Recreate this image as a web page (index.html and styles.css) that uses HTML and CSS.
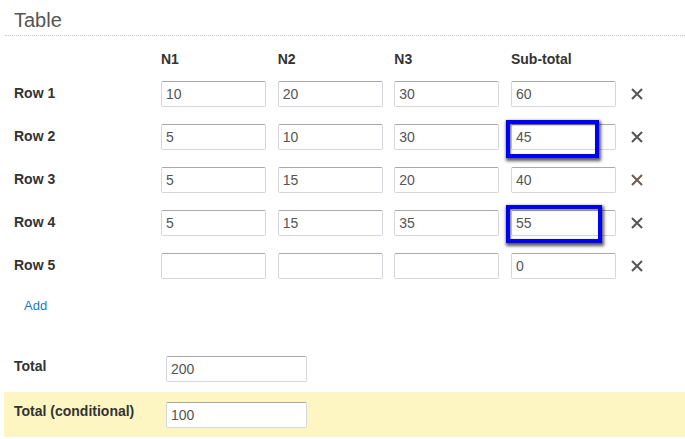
FILE: index.html
```html
<!DOCTYPE html>
<html>
<head>
<meta charset="utf-8">
<link rel="stylesheet" href="styles.css">
</head>
<body>
<div class="page">
  <h2 class="title">Table</h2>
  <div class="grid">
    <div class="row head">
      <div class="label"></div>
      <div class="cell">N1</div>
      <div class="cell">N2</div>
      <div class="cell">N3</div>
      <div class="cell">Sub-total</div>
    </div>
    <div class="row">
      <div class="label">Row 1</div>
      <div class="cell"><input class="num" value="10"></div>
      <div class="cell"><input class="num" value="20"></div>
      <div class="cell"><input class="num" value="30"></div>
      <div class="cell sub"><input class="num" value="60"></div>
      <span class="remove"><svg width="12" height="12" viewBox="0 0 12 12"><path d="M1 1L11 11M11 1L1 11" stroke="#555" stroke-width="2"/></svg></span>
    </div>
    <div class="row">
      <div class="label">Row 2</div>
      <div class="cell"><input class="num" value="5"></div>
      <div class="cell"><input class="num" value="10"></div>
      <div class="cell"><input class="num" value="30"></div>
      <div class="cell sub"><input class="num" value="45"><span class="hl hl-a"></span></div>
      <span class="remove"><svg width="12" height="12" viewBox="0 0 12 12"><path d="M1 1L11 11M11 1L1 11" stroke="#555" stroke-width="2"/></svg></span>
    </div>
    <div class="row">
      <div class="label">Row 3</div>
      <div class="cell"><input class="num" value="5"></div>
      <div class="cell"><input class="num" value="15"></div>
      <div class="cell"><input class="num" value="20"></div>
      <div class="cell sub"><input class="num" value="40"></div>
      <span class="remove"><svg width="12" height="12" viewBox="0 0 12 12"><path d="M1 1L11 11M11 1L1 11" stroke="#6e5a50" stroke-width="2"/></svg></span>
    </div>
    <div class="row">
      <div class="label">Row 4</div>
      <div class="cell"><input class="num" value="5"></div>
      <div class="cell"><input class="num" value="15"></div>
      <div class="cell"><input class="num" value="35"></div>
      <div class="cell sub"><input class="num" value="55"><span class="hl hl-b"></span></div>
      <span class="remove"><svg width="12" height="12" viewBox="0 0 12 12"><path d="M1 1L11 11M11 1L1 11" stroke="#555" stroke-width="2"/></svg></span>
    </div>
    <div class="row">
      <div class="label">Row 5</div>
      <div class="cell"><input class="num" value=""></div>
      <div class="cell"><input class="num" value=""></div>
      <div class="cell"><input class="num" value=""></div>
      <div class="cell sub"><input class="num" value="0"></div>
      <span class="remove"><svg width="12" height="12" viewBox="0 0 12 12"><path d="M1 1L11 11M11 1L1 11" stroke="#555" stroke-width="2"/></svg></span>
    </div>
  </div>
  <a class="add">Add</a>
  <div class="total-row">
    <div class="tlabel">Total</div>
    <input class="tinput" value="200">
  </div>
  <div class="total-row cond">
    <div class="tlabel">Total (conditional)</div>
    <input class="tinput" value="100">
  </div>
</div>
</body>
</html>
```
FILE: styles.css
```css
html, body {
  margin: 0;
  padding: 0;
  background: #fff;
}
body {
  font-family: "Liberation Sans", Arial, sans-serif;
  font-size: 14px;
  color: #333;
}
.page {
  padding-left: 4px;
  width: 681px;
}
.title {
  margin: 0 0 0 1px;
  padding: 10px 0 4px 9px;
  font-size: 20px;
  line-height: 21px;
  font-weight: normal;
  color: #555;
  border-bottom: 1px dotted #c8c8c8;
}
.grid {
  padding-left: 10px;
  margin-top: 13px;
}
.row {
  display: flex;
  align-items: center;
  height: 26px;
  margin-bottom: 17px;
}
.row.head {
  height: 20px;
  margin-bottom: 12px;
  font-weight: bold;
  line-height: 20px;
}
.label {
  width: 147px;
  flex: none;
  font-weight: bold;
  line-height: 20px;
  margin-top: -3px;
}
.row.head .label {
  margin-top: 0;
}
.cell {
  width: 116.67px;
  flex: none;
  position: relative;
}
.num, .tinput {
  box-sizing: border-box;
  height: 26px;
  margin: 0;
  padding: 0 4px;
  border: 1px solid #d4d8de;
  border-top-color: #a9a9a9;
  border-radius: 2px;
  font-family: "Liberation Sans", Arial, sans-serif;
  font-size: 14px;
  color: #555;
  background: #fff;
  outline: none;
}
.num {
  width: 105px;
  display: block;
}
.remove {
  width: 16px;
  height: 12px;
  display: flex;
  justify-content: center;
  margin-left: 1px;
}
.hl {
  position: absolute;
  box-sizing: border-box;
  border: 4px solid #0000f5;
  box-shadow: 1px 2px 3px 1px rgba(0,0,0,0.65), inset 1px 1px 2px rgba(0,0,0,0.55);
}
.hl-a {
  left: -5px;
  top: -4px;
  width: 93px;
  height: 38px;
}
.hl-b {
  left: -5px;
  top: -5px;
  width: 96px;
  height: 38px;
}
.add {
  display: block;
  margin-left: 20px;
  margin-top: 1px;
  line-height: 20px;
  height: 20px;
  font-size: 13px;
  color: #1b79c4;
}
.total-row {
  display: flex;
  align-items: flex-start;
  margin-top: 40px;
  padding-left: 10px;
}
.tlabel {
  width: 152px;
  flex: none;
  font-weight: bold;
  line-height: 20px;
}
.tinput {
  width: 141px;
}
.total-row.cond {
  margin-top: 10px;
  padding-top: 10px;
  padding-bottom: 9px;
  background: #fdf6c3;
}
.total-row.cond .tlabel {
  margin-top: -1px;
}
```
